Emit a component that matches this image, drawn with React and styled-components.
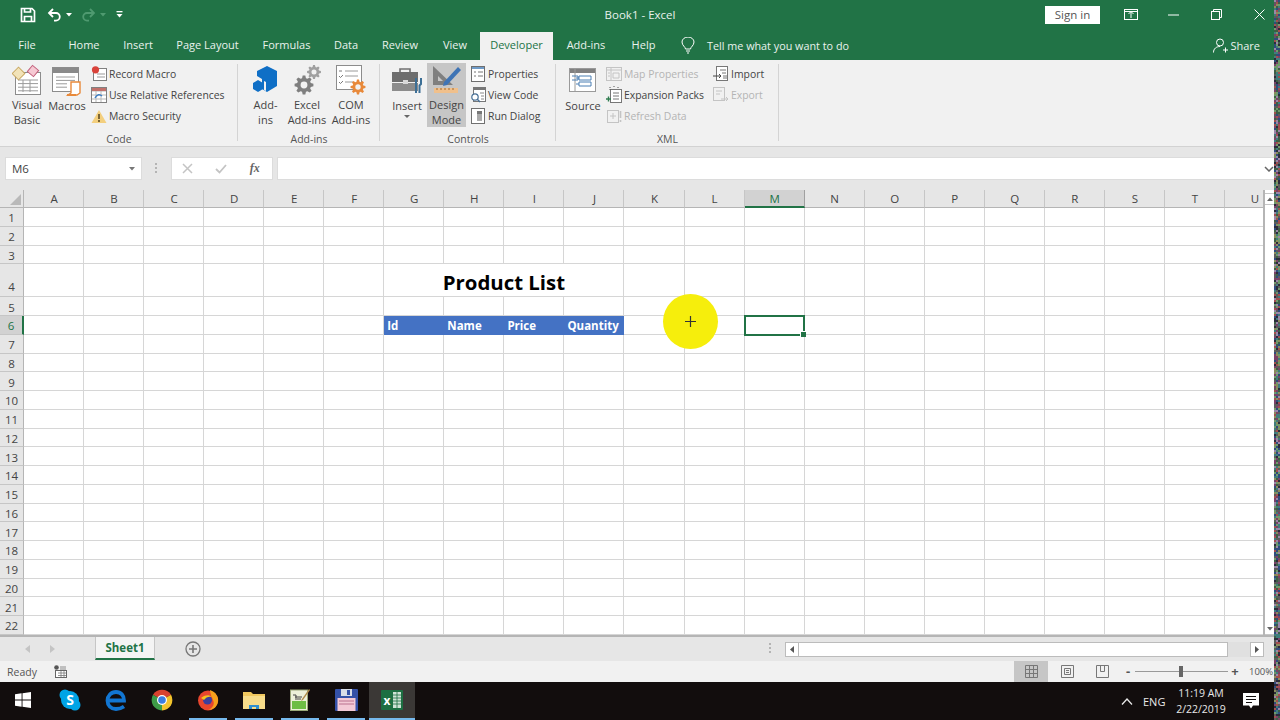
import React from 'react';
import styled, { createGlobalStyle } from 'styled-components';

const GREEN = '#217346';
const UI_FONT = '"Open Sans", "Noto Sans", "Liberation Sans", sans-serif';

const GlobalStyle = createGlobalStyle`
  html, body {
    margin: 0;
    padding: 0;
    overflow: hidden;
    background: #fff;
  }
  body {
    font-family: ${UI_FONT};
    font-size: 11px;
    color: #444;
  }
  * {
    box-sizing: border-box;
  }
`;

const Page = styled.div`
  display: flex;
  width: 1280px;
  height: 720px;
  overflow: hidden;
`;

const Screen = styled.div`
  display: flex;
  flex-direction: column;
  width: 1274px;
  height: 720px;
  overflow: hidden;
`;

/* title bar */
const TitleBar = styled.div`
  display: grid;
  grid-template-columns: 1fr auto 1fr;
  align-items: center;
  flex: 0 0 32px;
  padding: 0 0 3px 6px;
  background: ${GREEN};
  color: #fff;
`;

const QuickAccess = styled.div`
  display: flex;
  align-items: center;
  padding-left: 14px;
`;

const QuickButton = styled.div`
  display: flex;
  align-items: center;
  justify-content: center;
  width: ${p => p.$w}px;
  margin-right: ${p => p.$mr || 0}px;
`;

const WindowTitle = styled.div`
  font-size: 11.5px;
  color: #e8f1ec;
`;

const WindowControls = styled.div`
  display: flex;
  align-items: center;
  justify-content: flex-end;
  margin-right: -7px;
`;

const SignIn = styled.div`
  width: 55px;
  height: 18px;
  margin-right: 9px;
  background: #fff;
  color: #555;
  font-size: 11.5px;
  line-height: 18px;
  text-align: center;
`;

const CaptionButton = styled.div`
  display: flex;
  align-items: center;
  justify-content: center;
  width: 43px;
  height: 28px;
`;

/* tabs */
const TabRow = styled.div`
  display: flex;
  align-items: stretch;
  flex: 0 0 28px;
  padding-left: 6px;
  background: ${GREEN};
`;

const Tab = styled.div`
  width: ${p => p.$w}px;
  margin-right: ${p => p.$mr || 0}px;
  background: ${p => (p.$active ? '#f1f1f1' : 'transparent')};
  color: ${p => (p.$active ? GREEN : '#e9f2ed')};
  font-size: 11px;
  line-height: 25px;
  text-align: center;
  white-space: nowrap;
`;

const TellMe = styled.div`
  display: flex;
  align-items: center;
  gap: 12px;
  margin-left: 13px;
  padding-bottom: 2px;
  color: #e9f2ed;
  font-size: 10.8px;
`;

const Share = styled.div`
  display: flex;
  align-items: center;
  gap: 2px;
  margin-left: auto;
  margin-right: 14px;
  padding-bottom: 2px;
  color: #e9f2ed;
  font-size: 11px;
`;

/* ribbon */
const Ribbon = styled.div`
  display: flex;
  flex: 0 0 87px;
  background: #f1f1f1;
  border-bottom: 1px solid #d2d2d2;
`;

const Group = styled.div`
  position: relative;
  display: flex;
  flex-direction: column;
  width: ${p => p.$w}px;
  padding-top: 3px;
  &::after {
    content: '';
    position: absolute;
    top: 4px;
    bottom: 5px;
    right: 0;
    width: 1px;
    background: #d4d4d4;
  }
`;

const GroupBody = styled.div`
  display: flex;
  height: 64px;
  padding-left: 7px;
`;

const GroupLabel = styled.div`
  height: 14px;
  margin-top: 5px;
  font-size: 10.5px;
  line-height: 14px;
  text-align: center;
  color: #555;
`;

const LargeButton = styled.div`
  display: flex;
  flex-direction: column;
  align-items: center;
  width: ${p => p.$w}px;
  height: 64px;
  background: ${p => (p.$pressed ? '#c6c6c6' : 'transparent')};
`;

const LargeIcon = styled.div`
  display: flex;
  align-items: center;
  justify-content: center;
  width: 100%;
  height: 35px;
`;

const LargeText = styled.div`
  font-size: 11px;
  line-height: 15px;
  text-align: center;
  white-space: pre-line;
  color: #444;
`;

const SmallColumn = styled.div`
  display: flex;
  flex-direction: column;
  width: ${p => p.$w}px;
  margin-left: ${p => p.$ml || 0}px;
`;

const SmallButton = styled.div`
  display: flex;
  align-items: center;
  gap: 2px;
  height: 21.6px;
  padding-left: 1px;
  font-size: 10.4px;
  white-space: nowrap;
  color: ${p => (p.$disabled ? '#b4b4b4' : '#444')};
`;

const SmallIcon = styled.span`
  display: flex;
  align-items: center;
  justify-content: center;
  flex: 0 0 16px;
  width: 16px;
`;

const Caret = styled.div`
  width: 0;
  height: 0;
  margin: 2px auto 0;
  border-left: 3px solid transparent;
  border-right: 3px solid transparent;
  border-top: 3px solid #666;
`;

/* formula bar */
const FormulaBar = styled.div`
  display: flex;
  align-items: flex-start;
  flex: 0 0 43px;
  padding-top: 10px;
  padding-left: 5px;
  background: #e6e6e6;
`;

const NameBox = styled.div`
  display: flex;
  align-items: center;
  justify-content: space-between;
  width: 137px;
  height: 23px;
  padding: 0 6px;
  background: #fff;
  border: 1px solid #dcdcdc;
  font-size: 11.5px;
  color: #444;
`;

const Grip = styled.div`
  width: 2px;
  height: 11px;
  margin: 6px 14px 0 13px;
  background: repeating-linear-gradient(to bottom, #b4b4b4 0 2px, transparent 2px 4px);
`;

const SheetGrip = styled(Grip)`
  margin: 6px 14px 0 568px;
`;

const FxBox = styled.div`
  display: flex;
  align-items: center;
  width: 102px;
  height: 23px;
  margin-right: 4px;
  background: #fff;
  border: 1px solid #dcdcdc;
`;

const FxSlot = styled.div`
  display: flex;
  align-items: center;
  justify-content: center;
  width: ${p => p.$w}px;
  font-family: "Liberation Serif", serif;
  font-style: italic;
  font-size: 12px;
  font-weight: 700;
  color: #666;
`;

const FormulaInput = styled.div`
  display: flex;
  align-items: center;
  justify-content: flex-end;
  flex: 1;
  height: 23px;
  background: #fff;
  border: 1px solid #dcdcdc;
  border-right: none;
`;

/* sheet */
const SheetArea = styled.div`
  position: relative;
  display: flex;
  flex: 0 0 445px;
  overflow: hidden;
`;

const SheetGrid = styled.div`
  display: grid;
  grid-template-columns: 24px repeat(21, 60.05px);
  grid-template-rows: 18px repeat(3, 18.75px) 33px repeat(18, 18.75px);
  width: 1263px;
  flex: 0 0 1263px;
  overflow: hidden;
  background: #fff;
`;

const Corner = styled.div`
  position: relative;
  background: #e6e6e6;
  border-right: 1px solid #b5b5b5;
  border-bottom: 1px solid #b5b5b5;
  &::after {
    content: '';
    position: absolute;
    right: 2px;
    bottom: 2px;
    border-left: 11px solid transparent;
    border-bottom: 11px solid #b9b9b9;
  }
`;

const ColHead = styled.div`
  padding-left: 1px;
  background: ${p => (p.$active ? '#d2d2d2' : '#e6e6e6')};
  border-right: 1px solid ${p => (p.$active ? '#a0a0a0' : '#c6c6c6')};
  border-bottom: ${p => (p.$active ? `2px solid ${GREEN}` : '1px solid #b5b5b5')};
  color: ${p => (p.$active ? GREEN : '#444')};
  font-size: 11.5px;
  line-height: 17px;
  text-align: center;
`;

const RowHead = styled.div`
  display: flex;
  align-items: ${p => (p.$tall ? 'flex-end' : 'center')};
  justify-content: center;
  padding-top: ${p => (p.$tall ? '0' : '2px')};
  padding-bottom: ${p => (p.$tall ? '2px' : '0')};
  background: ${p => (p.$active ? '#d2d2d2' : '#e6e6e6')};
  border-right: ${p => (p.$active ? `2px solid ${GREEN}` : '1px solid #b5b5b5')};
  border-bottom: 1px solid #c6c6c6;
  color: ${p => (p.$active ? GREEN : '#444')};
  font-size: 11.5px;
`;

const Cell = styled.div`
  position: relative;
  border-right: 1px solid #d6d6d6;
  border-bottom: 1px solid #d6d6d6;
`;

const TitleCell = styled(Cell)`
  grid-column: span 4;
  display: flex;
  align-items: flex-end;
  justify-content: center;
  padding-bottom: 1px;
  color: #000;
  font-size: 20.4px;
  font-weight: 700;
  line-height: 26px;
`;

const HeaderCell = styled.div`
  padding: 1px 0 0 3px;
  background: #4472c4;
  color: #fff;
  font-size: 11.5px;
  font-weight: 700;
  line-height: 18px;
  white-space: nowrap;
`;

const SelectedCell = styled.div`
  position: relative;
  z-index: 1;
  margin: -1px 0 -1px -1px;
  border: 2px solid ${GREEN};
  &::after {
    content: '';
    position: absolute;
    right: -3px;
    bottom: -3px;
    width: 5px;
    height: 5px;
    background: ${GREEN};
    border: 1px solid #fff;
    border-width: 1px 0 0 1px;
  }
`;

const Spotlight = styled.div`
  position: absolute;
  z-index: 2;
  left: 663px;
  top: 104px;
  display: flex;
  align-items: center;
  justify-content: center;
  width: 55px;
  height: 55px;
  border-radius: 50%;
  background: #f6ee0c;
`;

const VScroll = styled.div`
  display: flex;
  flex-direction: column;
  justify-content: space-between;
  width: 11px;
  padding-top: 3px;
  background: #fff;
  border-left: 2px solid #b5b5b5;
`;

const VArrow = styled.div`
  display: flex;
  align-items: center;
  justify-content: center;
  height: 12px;
  background: #fff;
  border-top: ${p => (p.$top ? '1px solid #c6c6c6' : 'none')};
  border-bottom: 1px solid #c6c6c6;
`;

/* sheet tabs */
const SheetBar = styled.div`
  display: flex;
  align-items: flex-start;
  flex: 0 0 26px;
  background: #e6e6e6;
  border-top: 2px solid #b5b5b5;
`;

const NavArrows = styled.div`
  display: flex;
  align-items: center;
  gap: 20px;
  width: 95px;
  height: 24px;
  padding-left: 25px;
`;

const SheetTab = styled.div`
  width: 60px;
  height: 23px;
  background: #f4f4f4;
  border-left: 1px solid #c6c6c6;
  border-right: 1px solid #c6c6c6;
  border-bottom: 2px solid ${GREEN};
  color: ${GREEN};
  font-size: 11.5px;
  font-weight: 700;
  line-height: 22px;
  text-align: center;
`;

const AddSheet = styled.div`
  display: flex;
  align-items: center;
  height: 24px;
  margin-left: 30px;
`;

const HScroll = styled.div`
  display: flex;
  align-items: center;
  height: 15px;
  margin-top: 5px;
`;

const ScrollButton = styled.div`
  display: flex;
  align-items: center;
  justify-content: center;
  width: 14px;
  height: 15px;
  background: #fff;
  border: 1px solid #bcbcbc;
`;

const ScrollThumb = styled.div`
  width: 429px;
  height: 15px;
  background: #fff;
  border: 1px solid #bcbcbc;
  border-left: none;
`;

const ScrollTrack = styled.div`
  width: 22px;
  height: 15px;
  background: #e0e0e0;
`;

/* status bar */
const StatusBar = styled.div`
  display: flex;
  align-items: center;
  flex: 0 0 21px;
  padding-left: 7px;
  background: #f1f1f1;
  font-size: 10.5px;
  color: #555;
`;

const StatusMacro = styled.span`
  display: flex;
  margin-left: 17px;
`;

const StatusRight = styled.div`
  display: flex;
  align-items: center;
  width: 260px;
  height: 21px;
  margin-left: auto;
  overflow: hidden;
`;

const ViewButton = styled.div`
  display: flex;
  align-items: center;
  justify-content: center;
  flex: 0 0 ${p => p.$w}px;
  height: 21px;
  background: ${p => (p.$active ? '#c6c6c6' : 'transparent')};
`;

const ZoomSlider = styled.div`
  position: relative;
  flex: 0 0 93px;
  height: 1px;
  margin: 0 2px;
  background: #999;
`;

const ZoomThumb = styled.div`
  position: absolute;
  left: 44px;
  top: -5px;
  width: 4px;
  height: 11px;
  background: #666;
`;

const ZoomSign = styled.div`
  flex: 0 0 10px;
  margin-left: ${p => p.$ml || 0}px;
  font-size: 13px;
  font-weight: 700;
  line-height: 21px;
  text-align: center;
  color: #555;
`;

const ZoomValue = styled.div`
  margin-left: 9px;
  font-size: 9.5px;
  white-space: nowrap;
`;

/* taskbar */
const TaskBar = styled.div`
  display: flex;
  align-items: stretch;
  flex: 0 0 38px;
  background: #120d0d;
  color: #e8e8e8;
`;

const TaskButton = styled.div`
  position: relative;
  display: flex;
  align-items: center;
  justify-content: center;
  width: 46px;
  margin-left: ${p => p.$ml || 0}px;
  padding-bottom: 2px;
  background: ${p => (p.$active ? '#3b3836' : 'transparent')};
  &::after {
    content: ${p => (p.$running ? "''" : 'none')};
    position: absolute;
    left: ${p => (p.$active ? 0 : 4)}px;
    right: ${p => (p.$active ? 0 : 4)}px;
    bottom: 0;
    height: 2px;
    background: #76b9ed;
  }
`;

const Tray = styled.div`
  display: flex;
  align-items: center;
  margin-left: auto;
`;

const TrayLang = styled.div`
  width: 31px;
  margin-left: 10px;
  font-size: 11px;
`;

const Clock = styled.div`
  width: 54px;
  font-size: 10.5px;
  line-height: 16px;
  text-align: center;
  white-space: nowrap;
`;

const Notify = styled.div`
  display: flex;
  justify-content: center;
  width: 46px;
`;

/* right edge of the capture */
const NoiseStrip = styled.svg`
  display: block;
  flex: 0 0 6px;
  width: 6px;
  height: 720px;
`;

const NOISE_COLORS = ['#3d5f45', '#7a4168', '#2f4c7d', '#8b8b5c', '#5c5c5c', '#a34e4e', '#3f7d7d', '#9a86a8', '#2c2c3c', '#6f9a6a'];

const noiseCells = [];
let seed = 17;
for (let y = 0; y < 360; y++) {
  for (let x = 0; x < 3; x++) {
    seed = (seed * 48271) % 2147483647;
    noiseCells.push({ x: x * 2, y: y * 2, fill: NOISE_COLORS[seed % 10] });
  }
}

/* quick access icons */
const SaveIcon = () => (
  <svg width="16" height="16" viewBox="0 0 16 16" fill="none" stroke="#fff" strokeWidth="1.7">
    <path d="M1.5 1.5h10.5l2.5 2.5v10.5h-13z" />
    <path d="M4.5 14v-4.5h7V14M4.5 2v3h6V2" />
  </svg>
);

const UndoIcon = ({ color, flip }) => (
  <svg width="15" height="14" viewBox="0 0 15 14" fill="none" stroke={color} strokeWidth="1.8" style={flip ? { transform: 'scaleX(-1)' } : undefined}>
    <path d="M6 1L2 5l4 4M2 5h7a3.8 3.8 0 0 1 0 7.6H7" />
  </svg>
);

const TinyCaret = ({ color = '#fff', up }) => (
  <svg width="6" height="4" viewBox="0 0 6 4" style={up ? { transform: 'scaleY(-1)' } : undefined}>
    <path d="M0 0h6L3 3.5z" fill={color} />
  </svg>
);

const CustomizeIcon = () => (
  <svg width="7" height="7" viewBox="0 0 7 7" fill="#fff">
    <rect x="0.5" y="0" width="6" height="1.3" />
    <path d="M0.5 3h6L3.5 6.5z" />
  </svg>
);

/* ribbon icons */
const sheetLines = [0, 1, 2, 3];

const VisualBasicIcon = () => (
  <svg width="30" height="32" viewBox="0 0 30 32">
    <rect x="3.5" y="8.5" width="25" height="22" fill="#fff" stroke="#8c8c8c" />
    {sheetLines.map(i => <path key={i} d={`M6 ${16 + i * 3.6}h20`} stroke="#9a9a9a" />)}
    <path d="M11 16v12M18 16v12" stroke="#9a9a9a" />
    <rect x="2" y="5" width="9" height="9" transform="rotate(45 6.5 9.5)" fill="#f2e3b8" stroke="#c9a860" />
    <rect x="17" y="3" width="8" height="8" transform="rotate(40 21 7)" fill="#f6c9d3" stroke="#c2607c" />
  </svg>
);

const MacrosIcon = () => (
  <svg width="32" height="32" viewBox="0 0 32 32">
    <rect x="1.5" y="2.5" width="26" height="24" fill="#fff" stroke="#8c8c8c" />
    <rect x="2" y="3" width="25" height="5" fill="#8a8a8a" />
    {sheetLines.map(i => <path key={i} d={`M5 ${12 + i * 3.4}h${i < 2 ? 19 : 11}`} stroke="#9a9a9a" />)}
    <path d="M20 17h9v11l-3 2h-9l3-2z" fill="#fff" stroke="#e8893a" strokeWidth="1.4" />
    <path d="M16 30h9" stroke="#e8893a" strokeWidth="2" />
  </svg>
);

const RecordIcon = () => (
  <svg width="16" height="16" viewBox="0 0 16 16">
    <rect x="2.5" y="2.5" width="13" height="12" fill="#fff" stroke="#808080" />
    <path d="M6 8h8M6 11h8" stroke="#999" />
    <circle cx="4.5" cy="3.8" r="3.6" fill="#d9433b" />
  </svg>
);

const RelativeIcon = () => (
  <svg width="16" height="16" viewBox="0 0 16 16">
    <rect x="0.5" y="0.5" width="15" height="15" fill="#fff" stroke="#808080" />
    <path d="M1 4h14M1 8h14M1 12h14M5 1v14M10 1v14" stroke="#b8b8b8" />
    <rect x="1" y="1" width="14" height="3" fill="#c2706a" />
    <path d="M4 11c2-4 5-4 7-2" fill="none" stroke="#3f7fc4" strokeWidth="1.4" />
  </svg>
);

const WarningIcon = () => (
  <svg width="16" height="15" viewBox="0 0 16 15">
    <path d="M8 1l7.5 13H.5z" fill="#f3cf7e" />
    <path d="M8 5v5M8 11v2" stroke="#5c4a24" strokeWidth="1.6" />
  </svg>
);

const gearPath = (cx, cy, r) => {
  const pts = [];
  for (let i = 0; i < 8; i++) {
    const a = (i * Math.PI) / 4;
    const w = 0.14;
    const inner = r * 0.74;
    [[a - 2 * w, inner], [a - w, r], [a + w, r], [a + 2 * w, inner]].forEach(([t, d]) => {
      pts.push(`${(cx + Math.cos(t) * d).toFixed(2)} ${(cy + Math.sin(t) * d).toFixed(2)}`);
    });
  }
  return `M${pts.join('L')}z`;
};

const Gear = ({ cx, cy, r, color }) => (
  <>
    <path d={gearPath(cx, cy, r)} fill={color} />
    <circle cx={cx} cy={cy} r={r * 0.36} fill="#f1f1f1" />
  </>
);

const AddinsIcon = () => (
  <svg width="28" height="28" viewBox="0 0 28 28">
    <path d="M15 0l10 5v15l-10 6-5-3V13L5 10V5z" fill="#0f6fc6" />
    <path d="M6 14l5 3v6l-5 3-5-3v-6z" fill="#0f6fc6" />
    <path d="M12 15l2 1v9l-2-1z" fill="#f1f1f1" />
  </svg>
);

const ExcelAddinsIcon = () => (
  <svg width="28" height="30" viewBox="0 0 28 30">
    <Gear cx={11} cy={20} r={9.5} color="#7f7f7f" />
    <Gear cx={21} cy={7} r={7} color="#a0a0a0" />
  </svg>
);

const ComAddinsIcon = () => (
  <svg width="32" height="32" viewBox="0 0 32 32">
    <rect x="1.5" y="1.5" width="25" height="24" fill="#fff" stroke="#8c8c8c" />
    <path d="M4 7h3M4 12l1.5 1.5L8 11M4 18l1.5 1.5L8 17" fill="none" stroke="#7a7a7a" />
    <path d="M10 7h13M10 12h13M10 18h8" stroke="#9a9a9a" />
    <Gear cx={23} cy={23} r={7.5} color="#e8893a" />
  </svg>
);

const InsertIcon = () => (
  <svg width="32" height="30" viewBox="0 0 32 30">
    <path d="M9 6V3h10v3" fill="none" stroke="#707070" strokeWidth="1.6" />
    <rect x="1" y="6" width="26" height="10" fill="#6e6e6e" />
    <rect x="1" y="17" width="26" height="8" fill="#8c8c8c" />
    <rect x="12" y="14" width="5" height="4" fill="#d8d8d8" />
    <path d="M25 12v15M30 12v6l-1.5 1.5V27" stroke="#3c6f96" strokeWidth="2" fill="none" />
  </svg>
);

const DesignIcon = () => (
  <svg width="32" height="32" viewBox="0 0 32 32">
    <path d="M2 2v19h20z" fill="#7f7f7f" />
    <path d="M7 12v5h5z" fill="#c6c6c6" />
    <path d="M13 18L27 3l3 3-14 15-4 1z" fill="#3f74b5" />
    <rect x="3" y="24" width="24" height="5" fill="#f0c08c" />
    <path d="M6 24v2M10 24v2M14 24v2M18 24v2M22 24v2" stroke="#a06a30" />
  </svg>
);

const PropertiesIcon = () => (
  <svg width="14" height="16" viewBox="0 0 14 16">
    <rect x="0.5" y="0.5" width="13" height="15" fill="#fff" stroke="#6f6f6f" />
    <rect x="1" y="1" width="12" height="2" fill="#6f9bc8" />
    <path d="M3 6h2M7 6h5M3 10h2M7 10h5" stroke="#777" />
  </svg>
);

const ViewCodeIcon = () => (
  <svg width="16" height="16" viewBox="0 0 16 16">
    <rect x="3.5" y="0.5" width="12" height="14" fill="#fff" stroke="#777" />
    <rect x="4" y="1" width="11" height="2" fill="#777" />
    <path d="M10 6h4M11 9h3M11 12h3" stroke="#888" />
    <circle cx="5" cy="10" r="3.2" fill="#fff" stroke="#476f95" strokeWidth="1.2" />
    <path d="M7 12l3 3" stroke="#476f95" strokeWidth="1.4" />
  </svg>
);

const RunDialogIcon = () => (
  <svg width="14" height="16" viewBox="0 0 14 16">
    <rect x="0.5" y="0.5" width="13" height="15" fill="#fff" stroke="#707070" />
    <rect x="6" y="3" width="5" height="10" fill="#aaa" />
    <rect x="6" y="3" width="5" height="3" fill="#777" />
  </svg>
);

const SourceIcon = () => (
  <svg width="30" height="30" viewBox="0 0 30 30">
    <rect x="1.5" y="2.5" width="26" height="23" fill="#fff" stroke="#9a9a9a" />
    <rect x="2" y="3" width="25" height="4" fill="#808080" />
    <path d="M7 3v22" stroke="#9a9a9a" />
    <path d="M4 10h6v4H4M11 10h12v4H11zM11 16h12v4H11zM8 12h3M8 18h3" fill="none" stroke="#4a7fb3" />
  </svg>
);

const MapPropsIcon = () => (
  <svg width="16" height="16" viewBox="0 0 16 16" fill="none" stroke="#c4c4c4">
    <rect x="0.5" y="1.5" width="15" height="13" />
    <path d="M1 4h14M5 2v12M7 7h6v5H7z" />
    <path d="M2 7h2M2 10h2" />
  </svg>
);

const ExpansionIcon = () => (
  <svg width="16" height="17" viewBox="0 0 16 17" fill="none" stroke="#777">
    <rect x="4.5" y="3.5" width="11" height="13" fill="#fff" />
    <path d="M7 7h6M7 10h6M7 13h6" />
    <path d="M4 1v3M8 0v2M12 1v2" strokeDasharray="1 1" stroke="#555" />
    <path d="M0 13h5M2.5 10.5v5" stroke="#2f7d4f" strokeWidth="1.4" />
  </svg>
);

const RefreshIcon = () => (
  <svg width="16" height="16" viewBox="0 0 16 16" fill="none" stroke="#c4c4c4">
    <rect x="1.5" y="2.5" width="11" height="12" />
    <path d="M4 8h6M7 5v6" />
    <path d="M14.5 3v7M14.5 12v2" strokeWidth="1.6" />
  </svg>
);

const ImportIcon = () => (
  <svg width="16" height="16" viewBox="0 0 16 16" fill="none" stroke="#777">
    <rect x="3.5" y="0.5" width="11" height="14" fill="#fff" />
    <path d="M7 4h6M9 7h4" />
    <path d="M0 10h8M6 8l2 2-2 2" stroke="#444" />
    <path d="M10 10h4M10 12h4" />
  </svg>
);

const ExportIcon = () => (
  <svg width="16" height="16" viewBox="0 0 16 16" fill="none" stroke="#c4c4c4">
    <rect x="0.5" y="0.5" width="11" height="13" />
    <path d="M3 4h6M3 7h4" />
    <path d="M8 12h7M13 10l2 2-2 2" />
  </svg>
);

/* taskbar icons */
const WindowsIcon = () => (
  <svg width="16" height="16" viewBox="0 0 16 16" fill="#fff">
    <path d="M0 2.3L6.6 1.3V7.6H0zM7.5 1.2L16 0V7.6H7.5zM0 8.4H6.6V14.7L0 13.7zM7.5 8.4H16V16L7.5 14.8z" />
  </svg>
);

const SkypeIcon = () => (
  <svg width="22" height="22" viewBox="0 0 22 22">
    <circle cx="6" cy="6" r="5.5" fill="#00a4e6" />
    <circle cx="16" cy="16" r="5.5" fill="#00a4e6" />
    <circle cx="11" cy="11" r="9" fill="#00a4e6" />
    <text x="11" y="16" textAnchor="middle" fontSize="14" fontWeight="700" fontFamily="Open Sans, sans-serif" fill="#fff">S</text>
  </svg>
);

const EdgeIcon = () => (
  <svg width="22" height="22" viewBox="0 0 22 22" fill="none" stroke="#1276d3" strokeWidth="3.8">
    <path d="M3 11.5h16c0-5-3-8.5-8-8.5-5 0-8.5 3.8-8.5 8.5C2.5 16.5 6 20 11 20c3 0 5.5-.8 8-2.5" />
  </svg>
);

const ChromeIcon = () => (
  <svg width="22" height="22" viewBox="0 0 22 22">
    <path d="M11 11L2 5.8A10.5 10.5 0 0 1 20 5.8z" fill="#d8432f" />
    <path d="M11 11L2 5.8A10.5 10.5 0 0 0 11 21.5z" fill="#3e9c47" />
    <path d="M11 11L20 5.8A10.5 10.5 0 0 1 11 21.5z" fill="#f2c32c" />
    <circle cx="11" cy="11" r="5" fill="#fff" />
    <circle cx="11" cy="11" r="3.8" fill="#3b7de0" />
  </svg>
);

const FirefoxIcon = () => (
  <svg width="22" height="22" viewBox="0 0 22 22">
    <circle cx="11" cy="11.5" r="10" fill="#e8462e" />
    <path d="M13 1c6 2 9 7 8 12-1 5-5 8-10 8 5-2 7-6 5-10-1-3-3-6-3-10z" fill="#f7a11c" />
    <circle cx="10.5" cy="11" r="4.5" fill="#3c3f9e" />
    <path d="M4 9c3-3 8-4 11-1-3-1-6 0-8 3z" fill="#f7c11c" />
  </svg>
);

const ExplorerIcon = () => (
  <svg width="22" height="18" viewBox="0 0 22 18">
    <path d="M0 1h8l2 2h12v15H0z" fill="#f0c75e" />
    <rect x="0" y="5" width="22" height="13" fill="#f7dc8a" />
    <path d="M6 18v-4h10v4h-3v-2H9v2z" fill="#2f8fd0" />
  </svg>
);

const NotepadIcon = () => (
  <svg width="20" height="22" viewBox="0 0 20 22">
    <rect x="0.5" y="1" width="17" height="20.5" fill="#ecf1d8" stroke="#9aa878" />
    <rect x="2" y="12" width="14" height="8" fill="#6ebe44" />
    <path d="M3 6h3v5M5 8h7M7 10h4" stroke="#444" fill="none" />
    <path d="M19 0l-7 10-1 2 2-1 7-10z" fill="#b08c4a" />
  </svg>
);

const FloppyIcon = () => (
  <svg width="23" height="22" viewBox="0 0 23 22">
    <rect x="0" y="0" width="23" height="22" rx="1" fill="#3451a8" />
    <rect x="6" y="0" width="11" height="7" fill="#d8dde8" />
    <rect x="12" y="1" width="3" height="5" fill="#3451a8" />
    <rect x="2.5" y="9" width="18" height="13" fill="#f3c9d6" />
    <path d="M4 12h15M4 15h15" stroke="#b9708e" />
  </svg>
);

const ExcelIcon = () => (
  <svg width="22" height="20" viewBox="0 0 22 20">
    <rect x="0" y="0" width="22" height="20" rx="1" fill="#1d6f42" />
    <text x="6" y="15" textAnchor="middle" fontSize="12" fontWeight="700" fontFamily="Open Sans, sans-serif" fill="#fff">x</text>
    <rect x="12" y="2" width="8" height="16" fill="#cfe3d6" />
    <path d="M12 5h8M12 8h8M12 11h8M12 14h8M16 2v16" stroke="#1d6f42" strokeWidth="0.8" />
  </svg>
);

const COLUMNS = 'ABCDEFGHIJKLMNOPQRSTU'.split('');
const ROWS = Array.from({ length: 22 }, (_, i) => i + 1);
const TABLE_HEADERS = { G: 'Id', H: 'Name', I: 'Price', J: 'Quantity' };

const TABS = [
  { label: 'File', w: 42, mr: 8 },
  { label: 'Home', w: 56 },
  { label: 'Insert', w: 52 },
  { label: 'Page Layout', w: 87 },
  { label: 'Formulas', w: 71 },
  { label: 'Data', w: 48 },
  { label: 'Review', w: 60 },
  { label: 'View', w: 50 },
  { label: 'Developer', w: 73, active: true },
  { label: 'Add-ins', w: 66 },
  { label: 'Help', w: 49 }
];

const renderCell = (row, col) => {
  const key = `${col}${row}`;
  if (row === 4 && col === 'G') return <TitleCell key={key}>Product List</TitleCell>;
  if (row === 4 && 'HIJ'.includes(col)) return null;
  if (row === 6 && TABLE_HEADERS[col]) return <HeaderCell key={key}>{TABLE_HEADERS[col]}</HeaderCell>;
  if (row === 6 && col === 'M') return <SelectedCell key={key} />;
  return <Cell key={key} />;
};

const Small = ({ icon, disabled, children }) => (
  <SmallButton $disabled={disabled}>
    <SmallIcon>{icon}</SmallIcon>
    {children}
  </SmallButton>
);

const App = () => (
  <Page>
    <GlobalStyle />
    <Screen>
      <TitleBar>
        <QuickAccess>
          <QuickButton $w={16} $mr={11}><SaveIcon /></QuickButton>
          <QuickButton $w={15} $mr={3}><UndoIcon color="#fff" /></QuickButton>
          <QuickButton $w={8} $mr={8}><TinyCaret /></QuickButton>
          <QuickButton $w={15} $mr={3}><UndoIcon color="#4f9a70" flip /></QuickButton>
          <QuickButton $w={8} $mr={8}><TinyCaret color="#4f9a70" /></QuickButton>
          <QuickButton $w={8}><CustomizeIcon /></QuickButton>
        </QuickAccess>
        <WindowTitle>Book1 - Excel</WindowTitle>
        <WindowControls>
          <SignIn>Sign in</SignIn>
          <CaptionButton>
            <svg width="14" height="11" viewBox="0 0 14 11" fill="none" stroke="#fff">
              <rect x="0.5" y="0.5" width="13" height="10" />
              <path d="M7 9V3M4.5 5L7 2.5 9.5 5M1 2.5h12" />
            </svg>
          </CaptionButton>
          <CaptionButton>
            <svg width="11" height="2" viewBox="0 0 11 2"><rect width="11" height="1" y="0.5" fill="#fff" /></svg>
          </CaptionButton>
          <CaptionButton>
            <svg width="11" height="11" viewBox="0 0 11 11" fill="none" stroke="#fff">
              <rect x="0.5" y="2.5" width="8" height="8" />
              <path d="M2.5 2.5v-2h8v8h-2" />
            </svg>
          </CaptionButton>
          <CaptionButton>
            <svg width="11" height="11" viewBox="0 0 11 11" stroke="#fff"><path d="M.5.5l10 10M10.5.5l-10 10" /></svg>
          </CaptionButton>
        </WindowControls>
      </TitleBar>

      <TabRow>
        {TABS.map(t => (
          <Tab key={t.label} $w={t.w} $mr={t.mr} $active={t.active}>{t.label}</Tab>
        ))}
        <TellMe>
          <svg width="14" height="17" viewBox="0 0 14 17" fill="none" stroke="#fff">
            <path d="M4.5 12c0-2-3.5-3.5-3.5-7a6 5 0 0 1 12 0c0 3.5-3.5 5-3.5 7zM5 14h4M6 16h2" />
          </svg>
          Tell me what you want to do
        </TellMe>
        <Share>
          <svg width="15" height="15" viewBox="0 0 15 15" fill="none" stroke="#fff">
            <circle cx="7" cy="4.5" r="3.5" />
            <path d="M.5 14.5c0-4 3-6 6.5-6M10 12h5M12.5 9.5v5" />
          </svg>
          Share
        </Share>
      </TabRow>

      <Ribbon>
        <Group $w={238}>
          <GroupBody>
            <LargeButton $w={40}>
              <LargeIcon><VisualBasicIcon /></LargeIcon>
              <LargeText>{'Visual\nBasic'}</LargeText>
            </LargeButton>
            <LargeButton $w={40}>
              <LargeIcon><MacrosIcon /></LargeIcon>
              <LargeText>Macros</LargeText>
            </LargeButton>
            <SmallColumn $ml={3} $w={146}>
              <Small icon={<RecordIcon />}>Record Macro</Small>
              <Small icon={<RelativeIcon />}>Use Relative References</Small>
              <Small icon={<WarningIcon />}>Macro Security</Small>
            </SmallColumn>
          </GroupBody>
          <GroupLabel>Code</GroupLabel>
        </Group>

        <Group $w={142}>
          <GroupBody>
            <LargeButton $w={41}>
              <LargeIcon><AddinsIcon /></LargeIcon>
              <LargeText>{'Add-\nins'}</LargeText>
            </LargeButton>
            <LargeButton $w={42}>
              <LargeIcon><ExcelAddinsIcon /></LargeIcon>
              <LargeText>{'Excel\nAdd-ins'}</LargeText>
            </LargeButton>
            <LargeButton $w={46}>
              <LargeIcon><ComAddinsIcon /></LargeIcon>
              <LargeText>{'COM\nAdd-ins'}</LargeText>
            </LargeButton>
          </GroupBody>
          <GroupLabel>Add-ins</GroupLabel>
        </Group>

        <Group $w={176}>
          <GroupBody>
            <LargeButton $w={40}>
              <LargeIcon><InsertIcon /></LargeIcon>
              <LargeText>Insert</LargeText>
              <Caret />
            </LargeButton>
            <LargeButton $w={39} $pressed>
              <LargeIcon><DesignIcon /></LargeIcon>
              <LargeText>{'Design\nMode'}</LargeText>
            </LargeButton>
            <SmallColumn $ml={3} $w={84}>
              <Small icon={<PropertiesIcon />}>Properties</Small>
              <Small icon={<ViewCodeIcon />}>View Code</Small>
              <Small icon={<RunDialogIcon />}>Run Dialog</Small>
            </SmallColumn>
          </GroupBody>
          <GroupLabel>Controls</GroupLabel>
        </Group>

        <Group $w={223}>
          <GroupBody>
            <LargeButton $w={40}>
              <LargeIcon><SourceIcon /></LargeIcon>
              <LargeText>Source</LargeText>
            </LargeButton>
            <SmallColumn $ml={2} $w={107}>
              <Small disabled icon={<MapPropsIcon />}>Map Properties</Small>
              <Small icon={<ExpansionIcon />}>Expansion Packs</Small>
              <Small disabled icon={<RefreshIcon />}>Refresh Data</Small>
            </SmallColumn>
            <SmallColumn $w={60}>
              <Small icon={<ImportIcon />}>Import</Small>
              <Small disabled icon={<ExportIcon />}>Export</Small>
            </SmallColumn>
          </GroupBody>
          <GroupLabel>XML</GroupLabel>
        </Group>
      </Ribbon>

      <FormulaBar>
        <NameBox>
          M6
          <TinyCaret color="#777" />
        </NameBox>
        <Grip />
        <FxBox>
          <FxSlot $w={32}>
            <svg width="11" height="11" viewBox="0 0 11 11" stroke="#c4c4c4" strokeWidth="1.5"><path d="M1 1l9 9M10 1l-9 9" /></svg>
          </FxSlot>
          <FxSlot $w={34}>
            <svg width="12" height="10" viewBox="0 0 12 10" fill="none" stroke="#c4c4c4" strokeWidth="1.8"><path d="M1 5l3.5 3.5L11 1" /></svg>
          </FxSlot>
          <FxSlot $w={35}>fx</FxSlot>
        </FxBox>
        <FormulaInput>
          <svg width="10" height="6" viewBox="0 0 10 6" fill="none" stroke="#666" strokeWidth="1.5">
            <path d="M1 1l4 4 4-4" />
          </svg>
        </FormulaInput>
      </FormulaBar>

      <SheetArea>
        <SheetGrid>
          <Corner />
          {COLUMNS.map(c => <ColHead key={c} $active={c === 'M'}>{c}</ColHead>)}
          {ROWS.map(row => (
            <React.Fragment key={row}>
              <RowHead $active={row === 6} $tall={row === 4}>{row}</RowHead>
              {COLUMNS.map(col => renderCell(row, col))}
            </React.Fragment>
          ))}
        </SheetGrid>
        <VScroll>
          <VArrow $top><TinyCaret color="#666" up /></VArrow>
          <VArrow><TinyCaret color="#666" /></VArrow>
        </VScroll>
        <Spotlight>
          <svg width="11" height="11" viewBox="0 0 11 11" stroke="#333" strokeWidth="1.2"><path d="M5.5 0v11M0 5.5h11" /></svg>
        </Spotlight>
      </SheetArea>

      <SheetBar>
        <NavArrows>
          <svg width="5" height="8" viewBox="0 0 5 8"><path d="M5 0v8L0 4z" fill="#c4c4c4" /></svg>
          <svg width="5" height="8" viewBox="0 0 5 8"><path d="M0 0v8l5-4z" fill="#c4c4c4" /></svg>
        </NavArrows>
        <SheetTab>Sheet1</SheetTab>
        <AddSheet>
          <svg width="16" height="16" viewBox="0 0 16 16" fill="none" stroke="#777" strokeWidth="1.3">
            <circle cx="8" cy="8" r="7" />
            <path d="M8 4v8M4 8h8" strokeWidth="1.6" />
          </svg>
        </AddSheet>
        <SheetGrip />
        <HScroll>
          <ScrollButton>
            <svg width="4" height="7" viewBox="0 0 4 7"><path d="M4 0v7L0 3.5z" fill="#555" /></svg>
          </ScrollButton>
          <ScrollThumb />
          <ScrollTrack />
          <ScrollButton>
            <svg width="4" height="7" viewBox="0 0 4 7"><path d="M0 0v7l4-3.5z" fill="#555" /></svg>
          </ScrollButton>
        </HScroll>
      </SheetBar>

      <StatusBar>
        Ready
        <StatusMacro>
          <svg width="13" height="13" viewBox="0 0 13 13">
            <circle cx="2.5" cy="2.5" r="2.3" fill="#555" />
            <rect x="1.5" y="5.5" width="11" height="7" fill="#fff" stroke="#666" />
            <path d="M6 2h6M6 4h6M4 8h8M4 10.5h8M7 6v6M10 6v6" stroke="#777" strokeWidth="0.8" />
          </svg>
        </StatusMacro>
        <StatusRight>
          <ViewButton $active $w={34}>
            <svg width="13" height="13" viewBox="0 0 13 13" fill="none" stroke="#777">
              <path d="M.5.5h12v12H.5zM.5 4.5h12M.5 8.5h12M4.5.5v12M8.5.5v12" />
            </svg>
          </ViewButton>
          <ViewButton $w={38}>
            <svg width="13" height="13" viewBox="0 0 13 13" fill="none" stroke="#777">
              <path d="M.5.5h12v12H.5zM3.5 3.5h6v6h-6zM5 5.5h3M5 7.5h3" />
            </svg>
          </ViewButton>
          <ViewButton $w={32}>
            <svg width="13" height="13" viewBox="0 0 13 13" fill="none" stroke="#777">
              <path d="M.5.5h12v12H.5zM4.5.5v6h4v-6" />
            </svg>
          </ViewButton>
          <ZoomSign $ml={5}>-</ZoomSign>
          <ZoomSlider><ZoomThumb /></ZoomSlider>
          <ZoomSign>+</ZoomSign>
          <ZoomValue>100%</ZoomValue>
        </StatusRight>
      </StatusBar>

      <TaskBar>
        <TaskButton><WindowsIcon /></TaskButton>
        <TaskButton $ml={1}><SkypeIcon /></TaskButton>
        <TaskButton><EdgeIcon /></TaskButton>
        <TaskButton><ChromeIcon /></TaskButton>
        <TaskButton $running><FirefoxIcon /></TaskButton>
        <TaskButton $running><ExplorerIcon /></TaskButton>
        <TaskButton $running><NotepadIcon /></TaskButton>
        <TaskButton $running><FloppyIcon /></TaskButton>
        <TaskButton $running $active><ExcelIcon /></TaskButton>
        <Tray>
          <svg width="12" height="7" viewBox="0 0 12 7" fill="none" stroke="#e8e8e8" strokeWidth="1.3"><path d="M1 6.5L6 1l5 5.5" /></svg>
          <TrayLang>ENG</TrayLang>
          <Clock>11:19 AM<br />2/22/2019</Clock>
          <Notify>
            <svg width="16" height="16" viewBox="0 0 16 16">
              <path d="M0 0h16v12.5H10l-2 3-2-3H0z" fill="#fff" />
              <path d="M3 3.5h10M3 6.5h10M3 9.5h6" stroke="#120d0d" />
            </svg>
          </Notify>
        </Tray>
      </TaskBar>
    </Screen>
    <NoiseStrip viewBox="0 0 6 720" shapeRendering="crispEdges">
      {noiseCells.map(c => <rect key={`${c.x}-${c.y}`} x={c.x} y={c.y} width="2" height="2" fill={c.fill} />)}
    </NoiseStrip>
  </Page>
);

export default App;
